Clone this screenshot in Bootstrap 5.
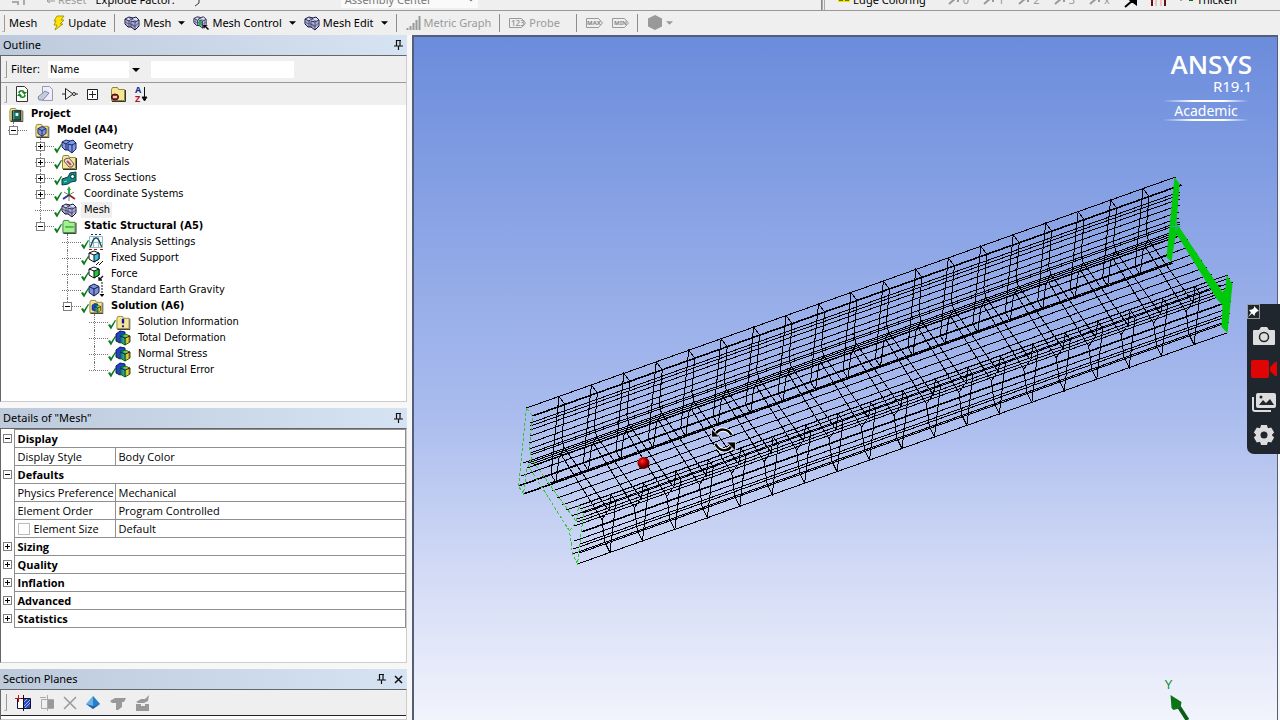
<!DOCTYPE html>
<html lang="en">
<head>
<meta charset="utf-8">
<meta name="viewport" content="width=device-width, initial-scale=1">
<title>Mechanical - Static Structural</title>
<link href="https://cdn.jsdelivr.net/npm/bootstrap@5.3.0/dist/css/bootstrap.min.css" rel="stylesheet">
<style>
body{font:11px/16px "Noto Sans","Liberation Sans",sans-serif;color:#000;background:#f7f7f7}
button,input,select{font:inherit;color:inherit}
svg{display:block;flex:none}
.plain{border:0;background:none;padding:0;display:flex;align-items:center;gap:3px;white-space:nowrap}
.off{color:#9a9a9a}
.bar-a{height:11px;background:#efefef;border-bottom:1px solid #999}
.bar-a>div{height:100%;padding-bottom:2px}
.bar-left{flex:0 0 822px;border-right:1px solid #888;gap:9px}
.bar-left .plain:last-child{margin-left:130px}
.asm{width:137px;background:#fafafa;color:#777}
.bar-right{gap:14px;border-left:3px double #aaa;padding-left:13px}
.bar-b{height:24px;background:#efefef;padding-left:2px}
.grip{width:3px;height:17px;border-right:1px solid #999;border-bottom:1px solid #bbb}
.vsep{width:1px;height:18px;background:#8c8c8c;margin:0 9px 0 8px}
.side{flex:0 0 408px;gap:6px;padding-right:1px}
.title{height:20px;padding:0 4px 0 3px;background:linear-gradient(90deg,#bccadb,#d5e3f3);font-size:11px}
.panel{border:1px solid #666;border-right-color:#ccc;border-bottom-color:#ccc;background:#fff}
.strip{background:#efefef;padding-left:3px}
.filter{height:27px;border-bottom:1px solid #999}
.tools{height:22px}
.pick{appearance:none;border:0;border-radius:0;background:#fff;width:95px;height:17px;padding:0 2px;line-height:17px;font-family:"DejaVu Sans Condensed",sans-serif}
.pickwrap svg{position:absolute;right:0;top:0}
.find{border:0;width:143px;height:17px}
.tree{font-family:"DejaVu Sans Condensed","DejaVu Sans",sans-serif;padding:1px 0 0 7px;min-height:296px}
.tree ul{list-style:none;margin:0;padding:0 0 0 27px}
.tree>ul,.tree>ul>li>ul{padding-left:0}
.tree li{position:relative}
.tree li li::before{content:"";position:absolute;left:5px;top:0;bottom:0;border-left:1px dotted #777}
.tree li li:last-child::before{bottom:auto;height:8px}
.node{height:16px;display:flex;align-items:center;white-space:nowrap;position:relative}
.node b,.node span{padding-left:7px}
.node .picked{background:#efefef;padding:0 2px 0 3px;margin-left:4px}
.stub{width:19px;position:relative;height:16px;background:linear-gradient(90deg,#777 50%,transparent 50%) 6px 8px/2px 1px repeat-x}
.box{border:1px solid #808080;background:#fff;width:9px;height:9px;padding:0;display:block;background-image:linear-gradient(#000,#000);background-size:5px 1px;background-position:center;background-repeat:no-repeat}
.box.plus{background-image:linear-gradient(#000,#000),linear-gradient(#000,#000);background-size:5px 1px,1px 5px}
.stub .box{position:absolute;left:1px;top:4px}
.stub+svg{margin-right:-1px}
.props{width:100%;table-layout:fixed;border-collapse:collapse;font-family:"Open Sans","Noto Sans",sans-serif}
.props td,.props th{height:18px;padding:0 0 0 3px;line-height:16px;border:1px solid #8f8f8f}
.props tr>:first-child{border-width:0 1px 0 0;padding:0 0 0 2px}
.props .fold{width:13px}
.props .key{width:101px}
.props label{display:flex;align-items:center;gap:4px}
.props .sub{white-space:nowrap}
.tick{appearance:none;width:12px;height:12px;border:1px solid #bbb;background:#fff;margin:0}
.details{min-height:235px}
.view{background:linear-gradient(#6b8cdc,#aabcee 55%,#d2daf5 78%,#f2f4fc);border:1px solid #555e78;border-width:2px 1px 0 2px;margin:0 2px 0 4px}
.scene{position:absolute;inset:0;width:100%;height:100%}
.brand{position:absolute;top:13px;right:25px;color:#fff;text-align:right}
.brand strong{display:block;font:600 26px/28px "Open Sans",sans-serif}
.brand em{display:block;font:normal 15px/16px "Noto Sans",sans-serif}
.brand i{display:block;font:normal 14px/17px "Noto Sans",sans-serif;text-align:center;margin:6px 4px 0 0;width:84px;border:solid;border-width:2px 0;border-image:linear-gradient(90deg,transparent,#fff 35%,#fff 70%,transparent) 1}
.dock{position:absolute;top:304px;right:0;width:33px;height:150px;background:#20262d;border-bottom-left-radius:7px;z-index:3}
.dock .plain{height:33px;justify-content:center;width:33px}
.dock .pin{height:15px;width:13px;border:1px solid #999}
</style>
</head>
<body class="vh-100 d-flex flex-column overflow-hidden position-relative">
<svg width="0" height="0" class="position-absolute" aria-hidden="true">
<defs>
<linearGradient id="rain"><stop offset="0" stop-color="#1a3fd0"/><stop offset=".4" stop-color="#22c070"/><stop offset=".75" stop-color="#f0d020"/><stop offset="1" stop-color="#e03010"/></linearGradient>
<symbol id="check" viewBox="0 0 8 16"><path d="M0 11l2-1 1 2 4-6 1 .5-5 9z" fill="#0b7a1c"/></symbol>
<symbol id="folder" viewBox="0 0 16 16"><path d="M1.500 14.500v-11l1-2h5l1 2h6v11z" fill="#f3e694" stroke="#94843a"/><path d="M15.500 4v11.500H2" fill="none" stroke="#333"/></symbol>
<symbol id="project" viewBox="0 0 16 16"><use href="#folder"/><path d="M4 4h9v10H4z" fill="#176b62" stroke="#111"/><path d="M7.500 6.500h3v3h-3z" fill="#fff"/><path d="M5.500 4v10" stroke="#9dd" stroke-dasharray="1 1"/></symbol>
<symbol id="cubelet" viewBox="0 0 16 16"><path d="M8 2l5 2.500v6L8 14l-5-3.500v-6z" fill="#7c93de" stroke="#111a4a"/><path d="M3 4.500L8 7l5-2.500M8 7v7" fill="none" stroke="#111a4a"/></symbol>
<symbol id="model" viewBox="0 0 16 16"><use href="#folder"/><use href="#cubelet" x="1" y="2" width="14" height="14"/></symbol>
<symbol id="geometry" viewBox="0 0 16 16"><path d="M1 4l4-2 4 1 3-1 3 3v6l-4 4-4-3H4l-3-3z" fill="#7f9be8" stroke="#17245e"/><path d="M1 4l4 2 4-3M5 6v6M7 6l4 1 4-2M11 7v8M7 6v6" fill="none" stroke="#17245e"/></symbol>
<symbol id="mesh" viewBox="0 0 16 16"><path d="M1 4l4-2 4 1 3-1 3 3v6l-4 4-4-3H4l-3-3z" fill="#dfe2fb" stroke="#15153a"/><path d="M1 4l4 2 4-3M5 6v6M7 6l4 1 4-2M11 7v8M7 6v6" fill="none" stroke="#24244e"/><path d="M1 7l4 2M3 5v6M9 6v7M13 6v6M7 9l4 2 4-3M5 8l6 4M5 3l7 3" fill="none" stroke="#33336e" stroke-width=".6"/></symbol>
<symbol id="materials" viewBox="0 0 16 16"><use href="#folder"/><path d="M4 5l4-1 5 6-2 3-3 0-5-6z" fill="#e8dcd8" stroke="#655"/><path d="M6 7l4 4" stroke="#c44" stroke-width="2"/></symbol>
<symbol id="section" viewBox="0 0 16 16"><path d="M1 9l6-2 2-4 6-1v9l-5 1-3 2-6 1z" fill="#178b86" stroke="#0a3e42"/><circle cx="11.500" cy="6.500" r="2" fill="#d8ffff" stroke="#033"/><path d="M3 12l3-1" stroke="#7fe0dc"/></symbol>
<symbol id="axes" viewBox="0 0 16 16"><path d="M8 9V2" stroke="#20b040" stroke-width="2"/><path d="M8 0l2 4H6z" fill="#20b040"/><path d="M8 9l-6 4" stroke="#2030c0" stroke-width="2"/><path d="M8 9l6 4" stroke="#c02020" stroke-width="2"/><path d="M3 6l10 6M13 6L3 12M8 9v6" stroke="#444" stroke-width=".7"/></symbol>
<symbol id="static" viewBox="0 0 16 16"><path d="M1.500 14.500v-11l1-2h5l1 2h6v11z" fill="#9cf58c" stroke="#3c7c34"/><path d="M4 8.500h9" stroke="#226622"/><path d="M15.500 4v11.500H2" fill="none" stroke="#333"/></symbol>
<symbol id="analysis" viewBox="0 0 16 16"><path d="M1.500 2.500h13v11h-13zM5.500 2v12M10.500 2v12M1 8.500h14" fill="#f4f8ff" stroke="#9bb"/><path d="M2 13c2-1 2-9 6-9s4 8 6 9" fill="none" stroke="#124a52" stroke-width="1.300"/><path d="M3 .5h2m2 0h2m2 0h2" stroke="#22a"/><path d="M1 15.500h3m2 0h3m3 0h3" stroke="#a11"/></symbol>
<symbol id="fixed" viewBox="0 0 16 16"><path d="M6 1l5 2v6l-5 3-5-3V3z" fill="#fff" stroke="#111"/><path d="M6 5l5-2v6l-5 3z" fill="#36c4ea" stroke="#111"/><path d="M1 3l5 2" stroke="#111"/><path d="M8 15l3-3m0 3l4-4" stroke="#111"/></symbol>
<symbol id="force" viewBox="0 0 16 16"><path d="M6 1l5 2v6l-5 3-5-3V3z" fill="#fff" stroke="#111"/><path d="M6 5l5-2v6l-5 3z" fill="#20c840" stroke="#111"/><path d="M1 3l5 2" stroke="#111"/><path d="M15 10l-4 4m0-3v3h3" fill="none" stroke="#111" stroke-width="1.300"/></symbol>
<symbol id="gravity" viewBox="0 0 16 16"><use href="#cubelet" x="-2" y="0"/><path d="M14 0v12" stroke="#111" stroke-dasharray="2 1"/><path d="M11.500 12h5L14 15z"/></symbol>
<symbol id="contour" viewBox="0 0 16 16"><path d="M1 4l4-3 5 1v9l-5 2-4-2z" fill="#1c46c8" stroke="#101b50"/><path d="M5 6l5-2 5 2v6l-5 3-5-3z" fill="url(#rain)" stroke="#162"/><path d="M5 6l5 2 5-2M10 8v7" fill="none" stroke="#123"/></symbol>
<symbol id="solution" viewBox="0 0 16 16"><use href="#folder"/><use href="#contour" x="3" y="4" width="11" height="11"/></symbol>
<symbol id="info" viewBox="0 0 16 16"><use href="#folder"/><path d="M8 4v5" stroke="#1414a0" stroke-width="2.500"/><path d="M7 11h2v2H7z" fill="#1414a0"/></symbol>
<symbol id="caret" viewBox="0 0 8 4"><path d="M0 0h8L4 4z" fill="currentColor"/></symbol>
<symbol id="pushpin" viewBox="0 0 9 10"><path d="M2.500 0v5.500M2 .5h5M6 0v5.500M0 6h9M4.500 6v4" fill="none" stroke="#111" stroke-width="1.200"/></symbol>
<symbol id="slope" viewBox="0 0 12 9"><path d="M1 8l7-6M5 2h5v4" fill="none" stroke="currentColor" stroke-width="2"/></symbol>
</defs>
</svg>

<header>
<div class="bar-a d-flex">
 <div class="bar-left d-flex align-items-end overflow-hidden ps-1 position-relative">
  <svg width="26" height="8" class="ms-2"><path d="M0 2h6v3M12 0v5" stroke="#aaa" stroke-width="2" fill="none"/></svg>
  <button class="plain off"><svg width="8" height="6"><path d="M0 4h8M3 1L0 4l3 2" stroke="#999" fill="none"/></svg>Reset</button>
  <span class="text-nowrap">Explode Factor:</span>
  <svg width="10" height="8" class="ms-2"><path d="M7 0v3L3 6" stroke="#333" fill="none"/></svg>
  <button class="plain asm justify-content-between px-1">Assembly Center <svg width="6" height="4"><use href="#caret"/></svg></button>
 </div>
 <div class="bar-right d-flex align-items-end flex-grow-1 overflow-hidden">
  <button class="plain me-2"><svg width="12" height="8"><path d="M0 0h12v6H0z" fill="#e6e600"/><path d="M1 0h4v5H1zM7 0h4v5H7z" fill="#776f00"/></svg>Edge Coloring</button>
  <button class="plain off" aria-label="Free edges"><svg width="12" height="9"><use href="#slope"/></svg>0</button>
  <button class="plain off" aria-label="Single edges"><svg width="12" height="9"><use href="#slope"/></svg>1</button>
  <button class="plain off" aria-label="Double edges"><svg width="12" height="9"><use href="#slope"/></svg>2</button>
  <button class="plain off" aria-label="Triple edges"><svg width="12" height="9"><use href="#slope"/></svg>3</button>
  <button class="plain off" aria-label="Multiple edges"><svg width="12" height="9"><use href="#slope"/></svg>x</button>
  <button class="plain" aria-label="Direction"><svg width="13" height="9"><path d="M1 8l7-6M5 0h7v5z" stroke="#000" stroke-width="2"/></svg></button>
  <button class="plain" aria-label="Vertices"><svg width="15" height="8"><path d="M1 0v6M14 0v6" stroke="#611" stroke-width="2"/><path d="M5 0v6M10 0v6" stroke="#d99"/></svg></button>
  <button class="plain"><svg width="14" height="8"><path d="M1 0v5" stroke="#181"/><path d="M11 0v5" stroke="#070" stroke-width="4"/></svg>Thicken</button>
 </div>
</div>
<nav class="bar-b d-flex align-items-center" aria-label="Mesh tools">
 <span class="grip"></span>
 <span class="ms-1">Mesh</span>
 <button class="plain ms-3"><svg width="12" height="16"><path d="M4 1h7L8 5h3L7 9h3L2 15l2-5H1l2-4H1z" fill="#ffe400" stroke="#9a8500" stroke-width=".8"/></svg>Update</button>
 <span class="vsep"></span>
 <button class="plain"><svg width="16" height="16"><use href="#mesh"/></svg>Mesh<svg class="ms-1" width="7" height="4"><use href="#caret"/></svg></button>
 <button class="plain ms-2"><svg width="16" height="16"><use href="#mesh" width="14" height="14"/><path d="M6 5l3 2v4L6 9z" fill="#1cb63c"/><path d="M10 10h5l-2 1 3 3-1 1-3-3-1 2z"/></svg>Mesh Control<svg class="ms-1" width="7" height="4"><use href="#caret"/></svg></button>
 <button class="plain ms-2"><svg width="16" height="16"><use href="#mesh"/></svg>Mesh Edit<svg class="ms-1" width="7" height="4"><use href="#caret"/></svg></button>
 <span class="vsep"></span>
 <button class="plain off"><svg width="15" height="16"><path d="M1.500 13v2M4.500 11v4M7.500 8v7M10.500 5v10M13.500 1v14" stroke="#999" stroke-width="2"/></svg>Metric Graph</button>
 <span class="vsep"></span>
 <button class="plain off"><svg width="17" height="12"><path d="M.5 1.500h12l4 4.500-4 4.500H.5z" fill="none" stroke="#999"/><text x="2" y="9" font-size="8" font-weight="600" fill="#999">123</text></svg>Probe</button>
 <span class="vsep ms-3"></span>
 <button class="plain off me-2" aria-label="Maximum"><svg width="18" height="12"><path d="M.5 1.500h12l4 4.500-4 4.500H.5z" fill="none" stroke="#999"/><text x="1" y="8" font-size="6" font-weight="700" fill="#888">MAX</text></svg></button>
 <button class="plain off" aria-label="Minimum"><svg width="17" height="12"><path d="M.5 1.500h12l4 4.500-4 4.500H.5z" fill="none" stroke="#999"/><text x="2" y="8" font-size="6" font-weight="700" fill="#888">MIN</text></svg></button>
 <span class="vsep"></span>
 <button class="plain off" aria-label="Display"><svg width="16" height="16"><path d="M8 0l7 3.500v8L8 15l-7-3.500v-8z" fill="#999"/></svg><svg width="7" height="4"><use href="#caret"/></svg></button>
</nav>
</header>

<main class="d-flex flex-grow-1 overflow-hidden">
<aside class="side d-flex flex-column overflow-hidden">
 <section>
  <div class="title d-flex align-items-center justify-content-between"><span>Outline</span><button class="plain" aria-label="Pin"><svg width="9" height="10"><use href="#pushpin"/></svg></button></div>
  <div class="panel">
   <div class="strip filter d-flex align-items-center"><span class="grip"></span><label for="by" class="ms-1">Filter:</label>
    <div class="pickwrap position-relative ms-2"><select id="by" class="pick"><option>Name</option></select><svg width="14" height="17"><path d="M0 0h14v17H0z" fill="#efefef"/><path d="M3 7h8l-4 4z"/></svg></div>
    <input class="find ms-2" aria-label="Filter text"></div>
   <div class="strip tools d-flex align-items-center gap-2"><span class="grip"></span>
    <button class="plain" aria-label="Refresh"><svg width="14" height="16"><path d="M1.500.5h8l3 3v12h-11z" fill="#fff" stroke="#333"/><path d="M4 7c0-3 5-3 5 0M10 9c0 3-5 3-5 0" fill="none" stroke="#14861c" stroke-width="1.500"/><path d="M7 6h5l-2.500 3zM2 10h5L4.500 7z" fill="#14861c"/></svg></button>
    <button class="plain" aria-label="Clear"><svg width="17" height="16"><path d="M5.500.5h7l3 3v11h-10z" fill="#eef" stroke="#99a"/><path d="M1 11l7-6 4 2-6 7-4 0z" fill="#c3c9de" stroke="#889"/></svg></button>
    <button class="plain" aria-label="Invert"><svg width="16" height="16"><path d="M0 8h3M3.500 2.500v11L11 8zM13 8h3" fill="none" stroke="#222"/><circle cx="12" cy="8" r="1.500" fill="#fff" stroke="#222"/></svg></button>
    <button class="plain" aria-label="Expand all"><svg width="12" height="11"><path d="M1.500.500h10v10h-10zM3 5.500h7M6.500 2v7" fill="#fff" stroke="#222"/></svg></button>
    <button class="plain ms-1" aria-label="Hide folders"><svg width="16" height="16"><use href="#folder"/><ellipse cx="5" cy="11" rx="3.500" ry="3" fill="#c22" stroke="#111"/><path d="M3 11h4" stroke="#fff" stroke-width="1.500"/></svg></button>
    <button class="plain" aria-label="Sort"><svg width="14" height="16"><text x="1" y="7" font-size="9" font-weight="700" fill="#15308c">A</text><text x="1" y="16" font-size="9" font-weight="700" fill="#a8152a">Z</text><path d="M10.500 1v12M8 11h5l-2.500 4z" stroke="#111"/></svg></button>
   </div>
   <div class="tree">
   <ul><li><div class="node"><svg width="16" height="15"><use href="#project"/></svg><b>Project</b></div>
    <ul><li><div class="node"><span class="stub p-0"><button class="box" aria-label="Collapse"></button></span><svg width="8" height="16"></svg><svg width="16" height="15"><use href="#model"/></svg><b>Model (A4)</b></div>
     <ul>
      <li><div class="node"><span class="stub p-0"><button class="box plus" aria-label="Expand"></button></span><svg width="8" height="16"><use href="#check"/></svg><svg width="16" height="16"><use href="#geometry"/></svg><span>Geometry</span></div></li>
      <li><div class="node"><span class="stub p-0"><button class="box plus" aria-label="Expand"></button></span><svg width="8" height="16"><use href="#check"/></svg><svg width="16" height="16"><use href="#materials"/></svg><span>Materials</span></div></li>
      <li><div class="node"><span class="stub p-0"><button class="box plus" aria-label="Expand"></button></span><svg width="8" height="16"><use href="#check"/></svg><svg width="16" height="16"><use href="#section"/></svg><span>Cross Sections</span></div></li>
      <li><div class="node"><span class="stub p-0"><button class="box plus" aria-label="Expand"></button></span><svg width="8" height="16"><use href="#check"/></svg><svg width="16" height="16"><use href="#axes"/></svg><span>Coordinate Systems</span></div></li>
      <li><div class="node"><span class="stub p-0"></span><svg width="8" height="16"><use href="#check"/></svg><svg width="16" height="16"><use href="#mesh"/></svg><span class="picked">Mesh</span></div></li>
      <li><div class="node"><span class="stub p-0"><button class="box" aria-label="Collapse"></button></span><svg width="8" height="16"><use href="#check"/></svg><svg width="16" height="15"><use href="#static"/></svg><b>Static Structural (A5)</b></div>
       <ul>
        <li><div class="node"><span class="stub p-0"></span><svg width="8" height="16"><use href="#check"/></svg><svg width="16" height="16"><use href="#analysis"/></svg><span>Analysis Settings</span></div></li>
        <li><div class="node"><span class="stub p-0"></span><svg width="8" height="16"><use href="#check"/></svg><svg width="16" height="16"><use href="#fixed"/></svg><span>Fixed Support</span></div></li>
        <li><div class="node"><span class="stub p-0"></span><svg width="8" height="16"><use href="#check"/></svg><svg width="16" height="16"><use href="#force"/></svg><span>Force</span></div></li>
        <li><div class="node"><span class="stub p-0"></span><svg width="8" height="16"><use href="#check"/></svg><svg width="16" height="16"><use href="#gravity"/></svg><span>Standard Earth Gravity</span></div></li>
        <li><div class="node"><span class="stub p-0"><button class="box" aria-label="Collapse"></button></span><svg width="8" height="16"><use href="#check"/></svg><svg width="16" height="15"><use href="#solution"/></svg><b>Solution (A6)</b></div>
         <ul>
          <li><div class="node"><span class="stub p-0"></span><svg width="8" height="16"><use href="#check"/></svg><svg width="16" height="15"><use href="#info"/></svg><span>Solution Information</span></div></li>
          <li><div class="node"><span class="stub p-0"></span><svg width="8" height="16"><use href="#check"/></svg><svg width="16" height="16"><use href="#contour"/></svg><span>Total Deformation</span></div></li>
          <li><div class="node"><span class="stub p-0"></span><svg width="8" height="16"><use href="#check"/></svg><svg width="16" height="16"><use href="#contour"/></svg><span>Normal Stress</span></div></li>
          <li><div class="node"><span class="stub p-0"></span><svg width="8" height="16"><use href="#check"/></svg><svg width="16" height="16"><use href="#contour"/></svg><span>Structural Error</span></div></li>
         </ul></li>
       </ul></li>
     </ul></li></ul></li></ul>
   </div>
  </div>
 </section>

 <section>
  <div class="title d-flex align-items-center justify-content-between"><span>Details of "Mesh"</span><button class="plain" aria-label="Pin"><svg width="9" height="10"><use href="#pushpin"/></svg></button></div>
  <div class="panel details">
   <table class="props">
    <colgroup><col class="fold"><col class="key"><col></colgroup>
    <tr><td><button class="box" aria-label="Collapse"></button></td><th colspan="2">Display</th></tr>
    <tr><td></td><td class="sub">Display Style</td><td>Body Color</td></tr>
    <tr><td><button class="box" aria-label="Collapse"></button></td><th colspan="2">Defaults</th></tr>
    <tr><td></td><td class="sub">Physics Preference</td><td>Mechanical</td></tr>
    <tr><td></td><td class="sub">Element Order</td><td>Program Controlled</td></tr>
    <tr><td></td><td class="sub"><label><input type="checkbox" class="tick">Element Size</label></td><td>Default</td></tr>
    <tr><td><button class="box plus" aria-label="Expand"></button></td><th colspan="2">Sizing</th></tr>
    <tr><td><button class="box plus" aria-label="Expand"></button></td><th colspan="2">Quality</th></tr>
    <tr><td><button class="box plus" aria-label="Expand"></button></td><th colspan="2">Inflation</th></tr>
    <tr><td><button class="box plus" aria-label="Expand"></button></td><th colspan="2">Advanced</th></tr>
    <tr><td><button class="box plus" aria-label="Expand"></button></td><th colspan="2">Statistics</th></tr>
   </table>
  </div>
 </section>

 <section class="flex-grow-1 d-flex flex-column">
  <div class="title d-flex align-items-center"><span class="me-auto">Section Planes</span><button class="plain me-2" aria-label="Pin"><svg width="9" height="10"><use href="#pushpin"/></svg></button><button class="plain" aria-label="Close"><svg width="9" height="9"><path d="M1 1l7 7M8 1L1 8" stroke="#111" stroke-width="1.500"/></svg></button></div>
  <div class="panel flex-grow-1">
   <div class="strip d-flex align-items-center gap-2 py-1 border-bottom border-dark"><span class="grip"></span>
    <button class="plain" aria-label="New section plane"><svg width="17" height="16"><path d="M2.500 3.500h13v10h-13z" fill="#fff" stroke="#113"/><path d="M8 4h7v9H8z" fill="#2b49b8"/><path d="M8 12l7-7M10 13l5-5M8 8l4-4" stroke="#9ab4ff"/><path d="M0 3.500h6M3.500 0v7" stroke="#c11"/><path d="M8.500 0v16" stroke="#111"/></svg></button>
    <button class="plain" aria-label="Edit section plane"><svg width="15" height="16"><path d="M1.500 4.500h12v9h-12zM7.500 0v16M0 2.500h6" fill="none" stroke="#aaa"/><path d="M8 5h6v8H8z" fill="#999"/></svg></button>
    <button class="plain" aria-label="Delete"><svg width="14" height="14"><path d="M1 1l12 12M13 1L1 13" stroke="#999" stroke-width="1.500"/></svg></button>
    <button class="plain" aria-label="Show whole elements"><svg width="16" height="16"><path d="M8 1l7 8-7 5-7-5z" fill="#67b0ea"/><path d="M8 1l7 8-7 2z" fill="#2c7cc6"/><path d="M1 9l7 2 7-2-7 5z" fill="#1f66ad"/></svg></button>
    <button class="plain" aria-label="Show capping"><svg width="18" height="16"><path d="M1 6l5-3h11l-2 4h-2v5l-4 3h-2V8H3z" fill="#999"/></svg></button>
    <button class="plain" aria-label="Cap by plane"><svg width="16" height="16"><path d="M1 7l5-3h4l4-4-1 6-4 2H3zM1 9h5v2h4V9h4v7H1z" fill="#999"/></svg></button>
   </div>
  </div>
 </section>
</aside>

<section class="view flex-grow-1 position-relative overflow-hidden" aria-label="Graphics">
 <svg class="scene" viewBox="414 37 862 683" preserveAspectRatio="xMidYMid meet">
  <g id="beam" fill="none" stroke="#000" shape-rendering="crispEdges"></g>
  <g id="near" fill="none" stroke="#2fc62f" stroke-dasharray="3 2" shape-rendering="crispEdges"></g>
  <path d="M1174 177l5 7-3 39 2 3 44 66 3-4 1-13 6 9-5 49-6-6 1-22-5-5-41-66-2 8-3 20-5-5z" fill="#00c80a"/>
  <path d="M1170 226.500h10M1175.500 221v10" stroke="#3aa"/>
  <radialGradient id="ball" cx=".4" cy=".35"><stop stop-color="#f33"/><stop offset=".5" stop-color="#c00"/><stop offset="1" stop-color="#600"/></radialGradient>
  <circle cx="643" cy="463" r="6" fill="url(#ball)"/>
  <g fill="none"><path d="M715 434c4-6 12-6 16 1M731 446c-4 6-12 6-16-2" stroke="#fff" stroke-width="4.500"/><path d="M715 434c4-6 12-6 16 1M731 446c-4 6-12 6-16-2" stroke="#000" stroke-width="2.500"/><path d="M711 429v8h8zM735 451v-9h-9z" fill="#000" stroke="#fff" stroke-width=".7"/></g>
  <text x="1164" y="689" font-family="Liberation Sans" font-size="12" fill="#0a8a1c">Y</text>
  <path d="M1178 706l9 14" stroke="#0b5c14" stroke-width="4"/><path d="M1170 695l11 7-1 6-7 2-2-2z" fill="#0c7418"/>
 </svg>
 <div class="brand"><strong>ANSYS</strong><em>R19.1</em><i>Academic</i></div>
</section>
</main>

<aside class="dock d-flex flex-column" aria-label="Recorder">
 <button class="plain pin" aria-label="Keep on top"><svg width="11" height="11"><path d="M6 0l5 5-2 .5-2 2L6.500 10 4 7.500 0 11l3-4.500L1 4l3-.5L6 2z" fill="#fff"/></svg></button>
 <button class="plain" aria-label="Take picture"><svg width="24" height="20"><path d="M2 4h5l2-3h6l2 3h5q1 0 1 1v13q0 1-1 1H2q-1 0-1-1V5q0-1 1-1z" fill="#ddd"/><circle cx="12" cy="11" r="4.500" fill="#ddd" stroke="#20262d" stroke-width="1.500"/></svg></button>
 <button class="plain" aria-label="Record"><svg width="26" height="18"><path d="M2 0h14q2 0 2 2v14q0 2-2 2H2q-2 0-2-2V2q0-2 2-2zM19 7l5-5h2v14h-2l-5-5z" fill="#e00505"/></svg></button>
 <button class="plain" aria-label="Gallery"><svg width="26" height="20"><path d="M2 5v12q0 2 2 2h16" fill="none" stroke="#ddd" stroke-width="2"/><path d="M7 1h16q2 0 2 2v11q0 2-2 2H7q-2 0-2-2V3q0-2 2-2z" fill="#ddd"/><path d="M8 13l4-5 3 3 4-4 4 6z" fill="#20262d"/><circle cx="10" cy="5" r="1.500" fill="#20262d"/></svg></button>
 <button class="plain" aria-label="Settings"><svg width="22" height="22" viewBox="-11 -11 22 22"><g fill="#ddd"><circle r="8"/><path id="cog" d="M-3-10h6l1 4h-8zM-3 10h6l1-4h-8z"/><use href="#cog" transform="rotate(60)"/><use href="#cog" transform="rotate(120)"/></g><circle r="3.500" fill="#20262d"/></svg></button>
</aside>

<script src="https://cdn.jsdelivr.net/npm/bootstrap@5.3.0/dist/js/bootstrap.bundle.min.js"></script>
<script>
// Extruded I-beam: one cross-section repeated along the sweep, plus the lines joining them.
const sweep = [649, -231], cells = 20;
const ring = ['M526 408L518 486L523 494L526 470L528 466L569 531L572 554L577 564L583 513L578 506L576 522L531 459L529 450L532 416Z', 'M531 459L528 466', 'M574 524L569 531'];
const points = [[526,408],[532,416,2],[530,423],[530,426],[530,430],[530,436],[529,443],[529,449],[530,453],[530,455],[523,463],[528,463],[531,464],[527,468],[521,476],[518,486,2],[523,494,2],
 [534,465],[538,470],[542,477],[547,484],[552,491],[557,498],[562,505],[566,510],[571,516],
 [578,506],[580,509],[583,513],[577,519],[577,522],[574,526],[581,532,2],[574,541],[580,544],[573,549],[579,553],[572,554],[577,564]];
let out = '';
for (const [x, y, w] of points) out += `<path d="M${x} ${y}l${sweep[0]} ${sweep[1]}" stroke-width="${w ? 1.6 : 1}"/>`;
for (let i = 1; i < cells; i++) out += `<g transform="translate(${sweep[0]*i/cells} ${sweep[1]*i/cells})">${ring.map(d => `<path d="${d}"/>`).join('')}</g>`;
document.getElementById('beam').innerHTML = out;
document.getElementById('near').innerHTML = ring.map(d => `<path d="${d}"/>`).join('');
</script>
</body>
</html>
